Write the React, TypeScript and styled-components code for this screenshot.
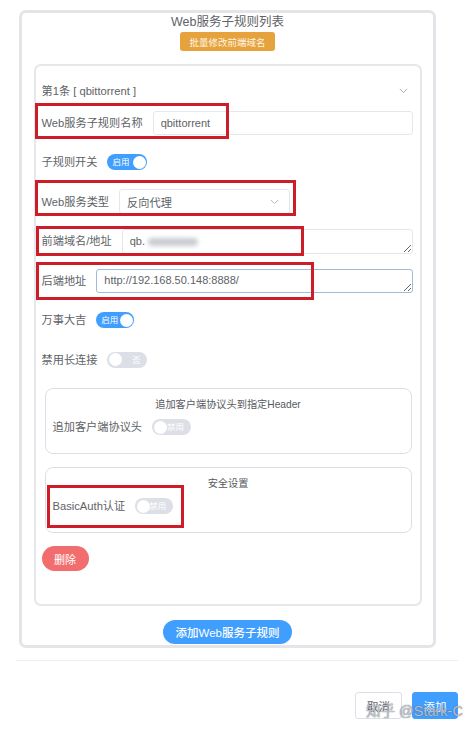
import React from "react";
import styled, { createGlobalStyle } from "styled-components";

const Global = createGlobalStyle`
  html, body { margin: 0; padding: 0; background: #ffffff; }
  body {
    font-family: "Liberation Sans", "Noto Sans CJK SC", sans-serif;
    color: #606266;
  }
  * { box-sizing: border-box; }
`;

const Page = styled.div`
  position: relative;
  width: 474px;
  height: 734px;
  overflow: hidden;
  padding: 10px 16px 0;
`;

const OuterCard = styled.section`
  margin-left: 3px;
  width: 417px;
  height: 638px;
  border: 3px solid #e3e5e8;
  border-radius: 7px;
  display: flex;
  flex-direction: column;
  align-items: center;
  padding-top: 2px;
`;

const ListTitle = styled.div`
  font-size: 12.5px;
  line-height: 14px;
  height: 14px;
  color: #606266;
`;

const BatchButton = styled.button`
  margin-top: 3px;
  width: 95px;
  height: 19px;
  border: none;
  border-radius: 3px;
  background: #e6a23c;
  color: #fff4e4;
  font-family: inherit;
  font-size: 9.5px;
  padding: 0;
  display: flex;
  align-items: center;
  justify-content: center;
`;

const InnerCard = styled.div`
  margin-top: 13px;
  width: 388px;
  height: 542px;
  border: 2px solid #e5e7ea;
  border-radius: 7px;
  padding: 0 7px 0 6px;
  display: flex;
  flex-direction: column;
`;

const CollapseHeader = styled.div`
  display: flex;
  align-items: center;
  justify-content: space-between;
  padding: 17px 5px 4px 0;
  font-size: 11.2px;
  line-height: 16px;
  color: #606266;
`;

const Chevron = ({ color = "#a8abb2" }: { color?: string }) => (
  <svg width="9" height="6" viewBox="0 0 9 6" fill="none">
    <path d="M0.8 0.9 L4.5 4.6 L8.2 0.9" stroke={color} strokeWidth="1" />
  </svg>
);

const FormRow = styled.div`
  position: relative;
  height: 39.5px;
  display: flex;
  align-items: center;
`;

const Label = styled.span`
  font-size: 11.2px;
  line-height: 16px;
  white-space: nowrap;
  margin-right: 10px;
  color: #606266;
`;

const TextInput = styled.input`
  flex: 1;
  min-width: 0;
  height: 24px;
  border: 1px solid #e4e7ed;
  border-radius: 3px;
  padding: 0 7px;
  font-family: inherit;
  font-size: 11px;
  color: #606266;
  outline: none;
  background: #fff;
`;

const SelectBox = styled.div`
  width: 171px;
  height: 25px;
  border: 1px solid #e4e7ed;
  border-radius: 3px;
  padding: 0 10px 0 7px;
  display: flex;
  align-items: center;
  justify-content: space-between;
  font-size: 11.2px;
  color: #606266;
`;

const AreaWrap = styled.div`
  position: relative;
  flex: 1;
  min-width: 0;
  display: flex;
`;

const TextArea = styled.textarea<{ $focus?: boolean; $h: number }>`
  flex: 1;
  min-width: 0;
  height: ${(p) => p.$h}px;
  border: 1px solid ${(p) => (p.$focus ? "#9fbdd6" : "#e4e7ed")};
  border-radius: 3px;
  padding: ${(p) => (p.$h - 17) / 2}px 7px;
  font-family: inherit;
  font-size: 11px;
  line-height: 15px;
  color: #606266;
  outline: none;
  resize: vertical;
  overflow: hidden;
  background: #fff;
`;

const Blurred = styled.span`
  position: absolute;
  left: 26px;
  top: 9px;
  width: 50px;
  height: 8px;
  border-radius: 4px;
  background: #c9ccd2;
  filter: blur(2px);
`;

const SwitchTrack = styled.span<{ $on: boolean; $w: number }>`
  position: relative;
  display: inline-flex;
  align-items: center;
  justify-content: ${(p) => (p.$on ? "flex-start" : "flex-end")};
  width: ${(p) => p.$w}px;
  height: 16px;
  border-radius: 8px;
  background: ${(p) => (p.$on ? "#409eff" : "#dcdfe6")};
  padding: ${(p) => (p.$on ? "0 0 0 5px" : "0 7px 0 0")};
  font-size: 8.5px;
  line-height: 16px;
  color: #ffffff;
`;

const Knob = styled.span<{ $on: boolean }>`
  position: absolute;
  top: 1.5px;
  ${(p) => (p.$on ? "right: 1.5px;" : "left: 1.5px;")}
  width: 13px;
  height: 13px;
  border-radius: 50%;
  background: #ffffff;
`;

const Switch = ({ on, text, w = 40 }: { on: boolean; text: string; w?: number }) => (
  <SwitchTrack $on={on} $w={w}>
    {text}
    <Knob $on={on} />
  </SwitchTrack>
);

const Highlight = styled.span<{ $l: number; $t: number; $w: number; $h: number }>`
  position: absolute;
  left: ${(p) => p.$l}px;
  top: ${(p) => p.$t}px;
  width: ${(p) => p.$w}px;
  height: ${(p) => p.$h}px;
  border: 3px solid #cc1d29;
  pointer-events: none;
`;

const SubCard = styled.div<{ $mt: number }>`
  margin: ${(p) => p.$mt}px 1px 0 3px;
  height: 66px;
  border: 1px solid #dcdfe6;
  border-radius: 8px;
  padding: 9px 7px 0;
  display: flex;
  flex-direction: column;
`;

const SubTitle = styled.div`
  text-align: center;
  font-size: 10.2px;
  line-height: 14px;
  color: #555a61;
`;

const SubRow = styled.div`
  position: relative;
  margin-top: 3px;
  height: 24px;
  display: flex;
  align-items: center;
`;

const DeleteButton = styled.button`
  align-self: flex-start;
  margin-top: 13px;
  width: 47px;
  height: 25px;
  border: none;
  border-radius: 13px;
  background: #f26d6d;
  color: #ffffff;
  font-family: inherit;
  font-size: 11px;
  padding: 0;
`;

const AddRuleButton = styled.button`
  margin-top: 14px;
  width: 129px;
  height: 24px;
  border: none;
  border-radius: 12px;
  background: #409eff;
  color: #ffffff;
  font-family: inherit;
  font-size: 11.5px;
  font-weight: 500;
  padding: 0;
`;

const Divider = styled.div`
  margin-top: 12px;
  height: 1px;
  background: #eceef2;
`;

const Footer = styled.div`
  margin-top: 31px;
  display: flex;
  justify-content: flex-end;
  gap: 10px;
`;

const FooterButton = styled.button<{ $primary?: boolean; $w: number }>`
  width: ${(p) => p.$w}px;
  height: 27px;
  border-radius: 3px;
  border: 1px solid ${(p) => (p.$primary ? "#409eff" : "#dcdfe6")};
  background: ${(p) => (p.$primary ? "#409eff" : "#ffffff")};
  color: ${(p) => (p.$primary ? "#ffffff" : "#606266")};
  font-family: inherit;
  font-size: 11.5px;
  padding: 0;
`;

const Watermark = styled.div`
  position: absolute;
  left: 366px;
  top: 702px;
  font-size: 14.5px;
  line-height: 18px;
  white-space: nowrap;
  color: rgba(215, 218, 224, 0.75);
  text-shadow: 0 0 1px rgba(90, 95, 105, 0.75), 0 0 1px rgba(90, 95, 105, 0.5);
  pointer-events: none;
`;

export default function App() {
  return (
    <>
      <Global />
      <Page>
        <OuterCard>
          <ListTitle>Web服务子规则列表</ListTitle>
          <BatchButton>批量修改前端域名</BatchButton>
          <InnerCard>
            <CollapseHeader>
              <span>第1条 [ qbittorrent ]</span>
              <Chevron />
            </CollapseHeader>

            <FormRow>
              <Label>Web服务子规则名称</Label>
              <TextInput defaultValue="qbittorrent" />
              <Highlight $l={-7} $t={0} $w={194} $h={36} />
            </FormRow>

            <FormRow>
              <Label>子规则开关</Label>
              <Switch on text="启用" />
            </FormRow>

            <FormRow>
              <Label>Web服务类型</Label>
              <SelectBox>
                <span>反向代理</span>
                <Chevron color="#b4b7bd" />
              </SelectBox>
              <Highlight $l={-7} $t={-2} $w={261} $h={36} />
            </FormRow>

            <FormRow>
              <Label>前端域名/地址</Label>
              <AreaWrap>
                <TextArea $h={25} defaultValue="qb." />
                <Blurred />
              </AreaWrap>
              <Highlight $l={-6} $t={4} $w={268} $h={30} />
            </FormRow>

            <FormRow>
              <Label>后端地址</Label>
              <AreaWrap>
                <TextArea $h={24} $focus defaultValue="http://192.168.50.148:8888/" />
              </AreaWrap>
              <Highlight $l={-6} $t={1} $w={278} $h={38} />
            </FormRow>

            <FormRow>
              <Label>万事大吉</Label>
              <Switch on text="启用" w={38} />
            </FormRow>

            <FormRow>
              <Label>禁用长连接</Label>
              <Switch on={false} text="否" />
            </FormRow>

            <SubCard $mt={8.5}>
              <SubTitle>追加客户端协议头到指定Header</SubTitle>
              <SubRow>
                <Label>追加客户端协议头</Label>
                <Switch on={false} text="禁用" w={39} />
              </SubRow>
            </SubCard>

            <SubCard $mt={13}>
              <SubTitle>安全设置</SubTitle>
              <SubRow>
                <Label>BasicAuth认证</Label>
                <Switch on={false} text="禁用" w={38} />
                <Highlight $l={-6} $t={-9} $w={137} $h={43} />
              </SubRow>
            </SubCard>

            <DeleteButton>删除</DeleteButton>
          </InnerCard>
          <AddRuleButton>添加Web服务子规则</AddRuleButton>
        </OuterCard>

        <Divider />

        <Footer>
          <FooterButton $w={47}>取消</FooterButton>
          <FooterButton $primary $w={46}>添加</FooterButton>
        </Footer>

        <Watermark>知乎 @Stark-C</Watermark>
      </Page>
    </>
  );
}
